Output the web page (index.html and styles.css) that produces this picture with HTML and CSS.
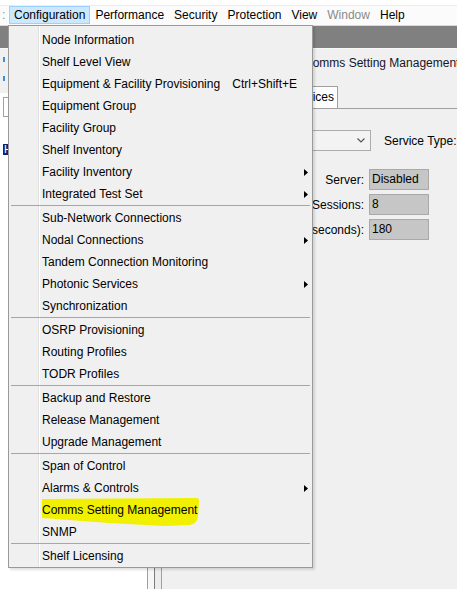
FILE: index.html
```html
<!DOCTYPE html>
<html>
<head>
<meta charset="utf-8">
<link rel="stylesheet" href="styles.css">
</head>
<body>
<div class="app">
  <div class="menubar">
    <span class="mb-cut">:</span>
    <span class="mb-item active">Configuration</span>
    <span class="mb-item">Performance</span>
    <span class="mb-item">Security</span>
    <span class="mb-item">Protection</span>
    <span class="mb-item">View</span>
    <span class="mb-item disabled">Window</span>
    <span class="mb-item">Help</span>
  </div>
  <div class="frame">
    <div class="titlebar"></div>
    <div class="split">
      <div class="leftpane">
        <div class="toolbar"><i class="ico"></i><i class="ico"></i></div>
        <div class="searchbox"></div>
        <div class="tree"><div class="node sel">H</div></div>
      </div>
      <div class="splitter"><div class="sp-a"></div><div class="sp-line"></div><div class="sp-b"></div></div>
      <div class="rightpane">
        <div class="hdr">Comms Setting Management</div>
        <div class="tabs"><div class="tab">Services</div></div>
        <div class="panel">
          <div class="selrow">
            <div class="combo">
              <svg class="chev" width="8" height="5" viewBox="0 0 8 5"><polyline points="0.5,0.5 4,4 7.5,0.5" fill="none" stroke="#555" stroke-width="1.2"/></svg>
            </div>
            <span class="lbl">Service Type:</span>
          </div>
          <div class="form">
            <span class="flabel">Server:</span><div class="fld">Disabled</div>
            <span class="flabel">Max Sessions:</span><div class="fld">8</div>
            <span class="flabel">Idle Timeout (seconds):</span><div class="fld">180</div>
          </div>
        </div>
      </div>
    </div>
  </div>

  <div class="menu">
    <div class="mi"><span class="t">Node Information</span></div>
    <div class="mi"><span class="t">Shelf Level View</span></div>
    <div class="mi"><span class="t">Equipment &amp; Facility Provisioning</span><span class="k">Ctrl+Shift+E</span></div>
    <div class="mi"><span class="t">Equipment Group</span></div>
    <div class="mi"><span class="t">Facility Group</span></div>
    <div class="mi"><span class="t">Shelf Inventory</span></div>
    <div class="mi"><span class="t">Facility Inventory</span><svg class="arr" width="4" height="7" viewBox="0 0 4 7"><polygon points="0,0 4,3.5 0,7" fill="#000"/></svg></div>
    <div class="mi"><span class="t">Integrated Test Set</span><svg class="arr" width="4" height="7" viewBox="0 0 4 7"><polygon points="0,0 4,3.5 0,7" fill="#000"/></svg></div>
    <div class="sep"></div>
    <div class="mi"><span class="t">Sub-Network Connections</span></div>
    <div class="mi"><span class="t">Nodal Connections</span><svg class="arr" width="4" height="7" viewBox="0 0 4 7"><polygon points="0,0 4,3.5 0,7" fill="#000"/></svg></div>
    <div class="mi"><span class="t">Tandem Connection Monitoring</span></div>
    <div class="mi"><span class="t">Photonic Services</span><svg class="arr" width="4" height="7" viewBox="0 0 4 7"><polygon points="0,0 4,3.5 0,7" fill="#000"/></svg></div>
    <div class="mi"><span class="t">Synchronization</span></div>
    <div class="sep"></div>
    <div class="mi"><span class="t">OSRP Provisioning</span></div>
    <div class="mi"><span class="t">Routing Profiles</span></div>
    <div class="mi"><span class="t">TODR Profiles</span></div>
    <div class="sep"></div>
    <div class="mi"><span class="t">Backup and Restore</span></div>
    <div class="mi"><span class="t">Release Management</span></div>
    <div class="mi"><span class="t">Upgrade Management</span></div>
    <div class="sep"></div>
    <div class="mi"><span class="t">Span of Control</span></div>
    <div class="mi"><span class="t">Alarms &amp; Controls</span><svg class="arr" width="4" height="7" viewBox="0 0 4 7"><polygon points="0,0 4,3.5 0,7" fill="#000"/></svg></div>
    <div class="mi hl">
      <svg class="marker" width="158" height="29" viewBox="0 0 158 29"><path d="M0,1 L155,0 Q157,0 157,3 L156,19 Q155,26 147,27 L122,28 Q60,25 0,20 Z" fill="#f0f000"/></svg>
      <span class="t">Comms Setting Management</span>
    </div>
    <div class="mi"><span class="t">SNMP</span></div>
    <div class="sep"></div>
    <div class="mi"><span class="t">Shelf Licensing</span></div>
  </div>
</div>
</body>
</html>
```

FILE: styles.css
```css
html, body {
  margin: 0;
  padding: 0;
}
body {
  font-family: "Liberation Sans", Arial, sans-serif;
  font-size: 12px;
  color: #000;
  background: #fff;
}
.app {
  position: relative;
  width: 457px;
  height: 589px;
  overflow: hidden;
  background: #fff;
}

/* menubar */
.menubar {
  height: 25px;
  box-sizing: border-box;
  padding-top: 6px;
  display: flex;
  align-items: flex-start;
  background: linear-gradient(#fff 0 5px, #ececec 5px 6px, #fbfbfb 6px);
  white-space: nowrap;
}
.mb-cut {
  width: 9px;
  box-sizing: border-box;
  padding-left: 2px;
  line-height: 18px;
  color: #7a8ea6;
}
.mb-item {
  height: 18px;
  box-sizing: border-box;
  line-height: 16px;
  padding: 0 4px;
  border: 1px solid transparent;
}
.mb-item.active {
  background: #cce8ff;
  border-color: #99d1ff;
}
.mb-item.disabled {
  color: #8a8a8a;
}

/* underlying frame */
.frame {
  border-top: 1px solid #dadada;
}
.titlebar {
  height: 22px;
  background: #808080;
  border-bottom: 1px solid #f8f8f8;
}
.split {
  display: flex;
  height: 540px;
}
.leftpane {
  width: 147px;
  border-right: 1px solid #a0a0a0;
  background: #fff;
  display: flex;
  flex-direction: column;
}
.toolbar {
  height: 44px;
  background: #f0f0f0;
  display: flex;
  flex-direction: column;
  gap: 14px;
  padding: 8px 0 0 3px;
  box-sizing: border-box;
}
.ico {
  display: block;
  width: 2px;
  height: 5px;
  background: #3b8fe0;
}
.searchbox {
  margin: 4px 0 0 3px;
  height: 20px;
  box-sizing: border-box;
  border: 1px solid #a0a0a0;
  background: #fff;
}
.tree {
  padding: 25px 0 0 3px;
}
.node {
  height: 11px;
  line-height: 11px;
  font-size: 11px;
}
.node.sel {
  display: inline-block;
  background: #0c2474;
  color: #fff;
  padding: 0 40px 0 1px;
}
.splitter {
  display: flex;
  width: 14px;
}
.sp-a {
  width: 6px;
  background: #f7f7f7;
}
.sp-line {
  width: 1px;
  background: #7c7c7c;
}
.sp-b {
  width: 6px;
  background: #ececec;
  border-right: 1px solid #a0a0a0;
}
.rightpane {
  flex: 1;
  background: #f0f0f0;
  min-width: 0;
  white-space: nowrap;
  overflow: hidden;
}
.hdr {
  height: 37px;
  box-sizing: border-box;
  padding: 7px 0 0 142px;
  line-height: 14px;
  color: #14142a;
}
.tabs {
  height: 22px;
  border-bottom: 1px solid #a0a0a0;
  padding-left: 122px;
  display: flex;
}
.tab {
  height: 22px;
  box-sizing: border-box;
  border: 1px solid #a0a0a0;
  border-bottom: none;
  background: #fff;
  padding: 0 3px;
  line-height: 21px;
}
.panel {
  padding-top: 21px;
}
.selrow {
  display: flex;
  align-items: center;
  gap: 13px;
  padding-left: 109px;
}
.combo {
  width: 100px;
  height: 21px;
  box-sizing: border-box;
  border: 1px solid #acacac;
  background: #f3f3f3;
  display: flex;
  align-items: center;
  justify-content: flex-end;
  padding-right: 5px;
}
.lbl {
  line-height: 14px;
}
.form {
  margin-top: 18px;
  display: grid;
  grid-template-columns: 202px 60px;
  grid-auto-rows: 21px;
  column-gap: 5px;
  row-gap: 4px;
  align-items: center;
}
.flabel {
  text-align: right;
}
.fld {
  height: 21px;
  box-sizing: border-box;
  border: 1px solid #a9a9a9;
  background: #c6c6c6;
  padding-left: 2px;
  line-height: 19px;
}

/* dropdown menu */
.menu {
  position: absolute;
  left: 8px;
  top: 25px;
  width: 305px;
  box-sizing: border-box;
  border: 1px solid #999;
  padding: 3px 0 0;
  background:
    linear-gradient(90deg, transparent 29px, #e0e0e0 29px 30px, #fff 30px 31px, transparent 31px),
    #f0f0f0;
  box-shadow: 2px 2px 2px rgba(0, 0, 0, 0.12);
  white-space: nowrap;
}
.mi {
  position: relative;
  display: flex;
  align-items: center;
  height: 22px;
  padding: 0 4px 0 33px;
}
.mi .t {
  position: relative;
  z-index: 1;
  flex: 1;
}
.mi .k {
  margin-right: 11px;
}
.arr {
  display: block;
}
.marker {
  position: absolute;
  left: 33px;
  top: -1px;
  z-index: 0;
}
.sep {
  height: 1px;
  margin: 0 2px;
  border-top: 1px solid #a6a6a6;
}
```
